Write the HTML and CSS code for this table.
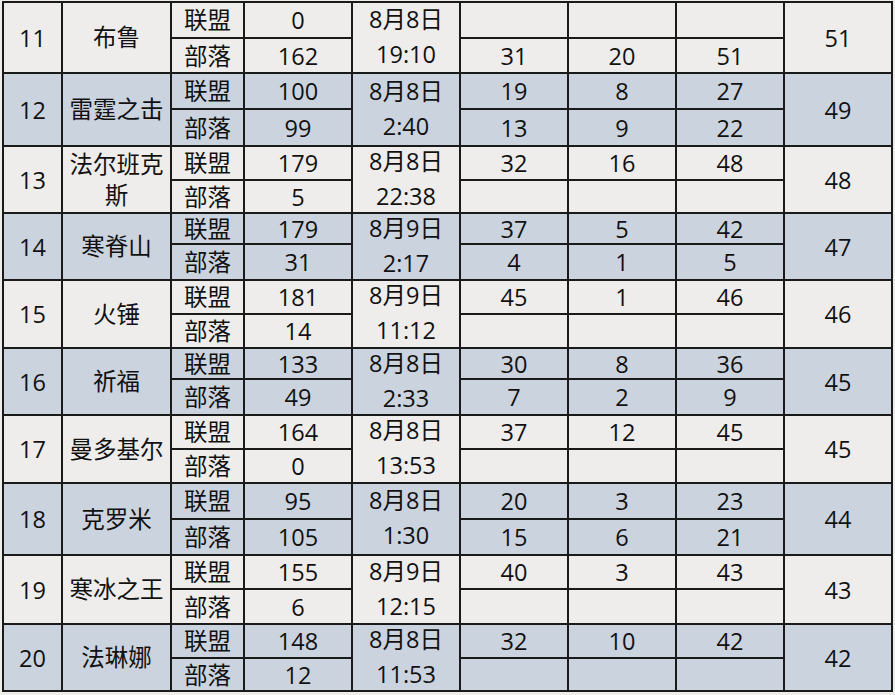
FILE: index.html
```html
<!DOCTYPE html>
<html lang="zh">
<head>
<meta charset="utf-8">
<link rel="stylesheet" href="styles.css">
</head>
<body>
<div class="sheet">
<table class="grid">
  <colgroup>
    <col class="c-rank"><col class="c-name"><col class="c-side"><col class="c-num"><col class="c-date">
    <col class="c-num"><col class="c-num"><col class="c-num"><col class="c-total">
  </colgroup>
  <tbody>
    <tr class="light h36"><td rowspan="2">11</td><td rowspan="2" class="name">布鲁</td><td>联盟</td><td>0</td><td rowspan="2" class="date"><div class="when">8月8日<br>19:10</div></td><td></td><td></td><td></td><td rowspan="2">51</td></tr>
    <tr class="light h35"><td>部落</td><td>162</td><td>31</td><td>20</td><td>51</td></tr>

    <tr class="blue h36"><td rowspan="2">12</td><td rowspan="2" class="name">雷霆之击</td><td>联盟</td><td>100</td><td rowspan="2" class="date"><div class="when">8月8日<br>2:40</div></td><td>19</td><td>8</td><td>27</td><td rowspan="2">49</td></tr>
    <tr class="blue h37"><td>部落</td><td>99</td><td>13</td><td>9</td><td>22</td></tr>

    <tr class="light h34"><td rowspan="2">13</td><td rowspan="2" class="name">法尔班克斯</td><td>联盟</td><td>179</td><td rowspan="2" class="date"><div class="when">8月8日<br>22:38</div></td><td>32</td><td>16</td><td>48</td><td rowspan="2">48</td></tr>
    <tr class="light h33"><td>部落</td><td>5</td><td></td><td></td><td></td></tr>

    <tr class="blue h31"><td rowspan="2">14</td><td rowspan="2" class="name">寒脊山</td><td>联盟</td><td>179</td><td rowspan="2" class="date"><div class="when">8月9日<br>2:17</div></td><td>37</td><td>5</td><td>42</td><td rowspan="2">47</td></tr>
    <tr class="blue h36"><td>部落</td><td>31</td><td>4</td><td>1</td><td>5</td></tr>

    <tr class="light h34"><td rowspan="2">15</td><td rowspan="2" class="name">火锤</td><td>联盟</td><td>181</td><td rowspan="2" class="date"><div class="when">8月9日<br>11:12</div></td><td>45</td><td>1</td><td>46</td><td rowspan="2">46</td></tr>
    <tr class="light h34"><td>部落</td><td>14</td><td></td><td></td><td></td></tr>

    <tr class="blue h31"><td rowspan="2">16</td><td rowspan="2" class="name">祈福</td><td>联盟</td><td>133</td><td rowspan="2" class="date"><div class="when">8月8日<br>2:33</div></td><td>30</td><td>8</td><td>36</td><td rowspan="2">45</td></tr>
    <tr class="blue h36"><td>部落</td><td>49</td><td>7</td><td>2</td><td>9</td></tr>

    <tr class="light h34"><td rowspan="2">17</td><td rowspan="2" class="name">曼多基尔</td><td>联盟</td><td>164</td><td rowspan="2" class="date"><div class="when">8月8日<br>13:53</div></td><td>37</td><td>12</td><td>45</td><td rowspan="2">45</td></tr>
    <tr class="light h34"><td>部落</td><td>0</td><td></td><td></td><td></td></tr>

    <tr class="blue h36"><td rowspan="2">18</td><td rowspan="2" class="name">克罗米</td><td>联盟</td><td>95</td><td rowspan="2" class="date"><div class="when">8月8日<br>1:30</div></td><td>20</td><td>3</td><td>23</td><td rowspan="2">44</td></tr>
    <tr class="blue h36"><td>部落</td><td>105</td><td>15</td><td>6</td><td>21</td></tr>

    <tr class="light h34"><td rowspan="2">19</td><td rowspan="2" class="name">寒冰之王</td><td>联盟</td><td>155</td><td rowspan="2" class="date"><div class="when">8月9日<br>12:15</div></td><td>40</td><td>3</td><td>43</td><td rowspan="2">43</td></tr>
    <tr class="light h35"><td>部落</td><td>6</td><td></td><td></td><td></td></tr>

    <tr class="blue h34"><td rowspan="2">20</td><td rowspan="2" class="name">法琳娜</td><td>联盟</td><td>148</td><td rowspan="2" class="date"><div class="when">8月8日<br>11:53</div></td><td>32</td><td>10</td><td>42</td><td rowspan="2">42</td></tr>
    <tr class="blue h33"><td>部落</td><td>12</td><td></td><td></td><td></td></tr>
  </tbody>
</table>
</div>
</body>
</html>
```

FILE: styles.css
```css
html, body {
  margin: 0;
  padding: 0;
  background: #ededec;
}
.sheet {
  padding: 1px 0 0 2px;
}
.grid {
  border-collapse: collapse;
  table-layout: fixed;
  width: 891px;
  font-family: "Open Sans", "Noto Sans CJK SC", sans-serif;
  font-size: 23.5px;
  font-weight: 400;
  color: #111111;
}
.c-rank { width: 59px; }
.c-name { width: 109px; }
.c-side { width: 73px; }
.c-num { width: 108px; }
.c-date { width: 108px; }
.c-total { width: 108px; }
.grid td {
  border: 2px solid #1a1a1a;
  text-align: center;
  vertical-align: middle;
  padding: 0;
  line-height: 28px;
}
.grid td.name { line-height: 31px; }
.when {
  line-height: 35px;
  margin: -6px 0 -4px;
}
.light td { background: #eeedec; }
.blue td { background: #cbd3df; }
.h31 { height: 31px; }
.h33 { height: 33px; }
.h34 { height: 34px; }
.h35 { height: 35px; }
.h36 { height: 36px; }
.h37 { height: 37px; }
```
